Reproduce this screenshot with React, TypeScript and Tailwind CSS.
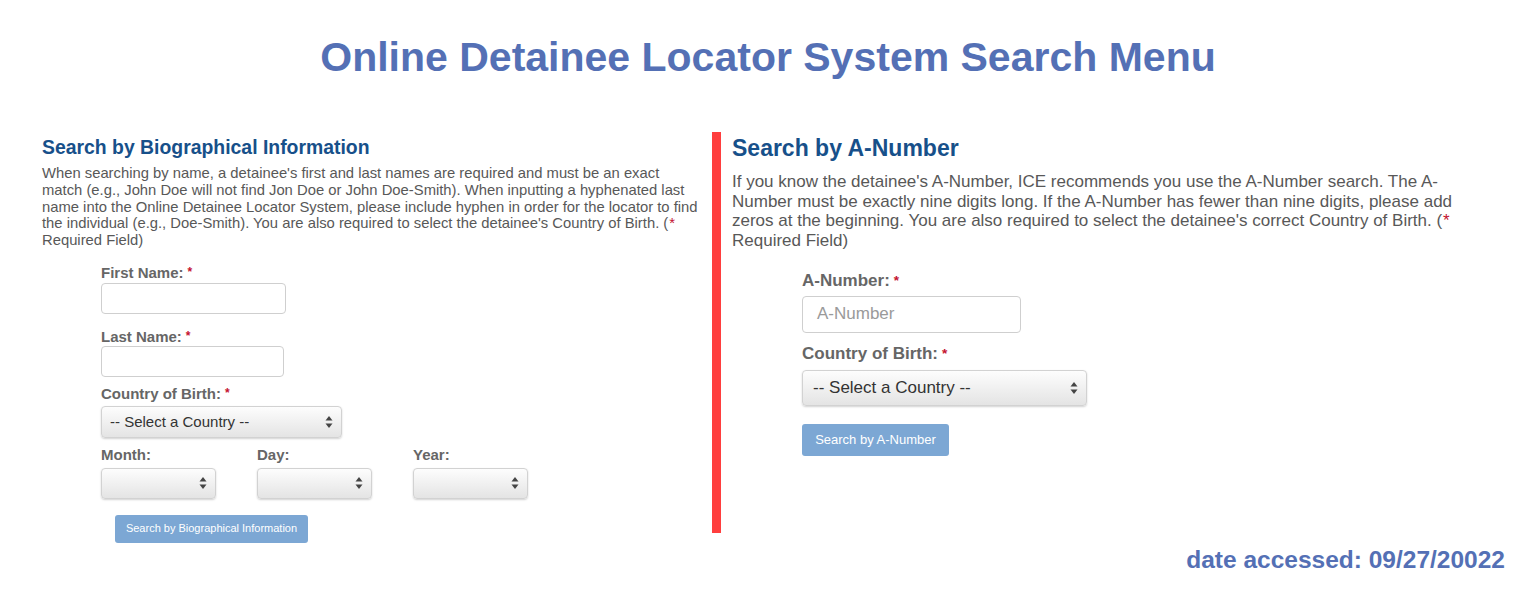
import React from 'react';

const Arrows = () => (
  <svg className="pointer-events-none absolute right-[9px] top-1/2 -translate-y-1/2" width="8" height="14" viewBox="0 0 8 14">
    <path d="M4 1 L7.5 5.5 L0.5 5.5 Z" fill="#444" />
    <path d="M4 13 L7.5 8.5 L0.5 8.5 Z" fill="#444" />
  </svg>
);

function Select({ className, text, textClass }: { className: string; text?: string; textClass?: string }) {
  return (
    <div className={`relative ${className}`}>
      <div
        className={`flex h-full w-full items-center rounded-[4px] border border-[#d2d2d2] bg-gradient-to-b from-[#fdfdfd] to-[#e4e4e4] shadow-[0_1px_2px_rgba(0,0,0,0.18)] ${textClass ?? ''}`}
      >
        {text}
      </div>
      <Arrows />
    </div>
  );
}

const Req = () => <span className="ml-[4px] text-[0.8em] align-top text-[#c4122f]">*</span>;

export default function App() {
  return (
    <div className="h-[597px] w-full overflow-hidden bg-white font-['Liberation_Sans',Arial,sans-serif]">
      <div className="h-[132px] pt-[33px] text-center">
        <h1 className="text-[41px] font-bold leading-[48px] text-[#5470b5]">
          Online Detainee Locator System Search Menu
        </h1>
      </div>

      <div className="flex h-[401px] items-start">
        {/* left: biographical search */}
        <div className="w-[670px] shrink-0 pl-[42px]">
          <h2 className="mt-[4px] text-[19.4px] font-bold leading-[22px] text-[#17508a]">
            Search by Biographical Information
          </h2>
          <p className="mt-[7px] w-[659px] text-[14.8px] leading-[16.8px] text-[#585858]">
            When searching by name, a detainee's first and last names are required and must be an exact match (e.g., John
            Doe will not find Jon Doe or John Doe-Smith). When inputting a hyphenated last name into the Online Detainee
            Locator System, please include hyphen in order for the locator to find the individual (e.g., Doe-Smith). You
            are also required to select the detainee's Country of Birth. (<span className="ml-[1px] text-[#c4122f]">*</span>{' '}
            Required Field)
          </p>

          <div className="mt-[15px] pl-[59px] text-[15px] font-bold leading-[17px] text-[#666]">
            <div className="mb-[2px]">
              First Name:
              <Req />
            </div>
            <div className="h-[31px] w-[185px] rounded-[4px] border border-[#cfcfcf] bg-white" />

            <div className="mb-[1px] mt-[14px]">
              Last Name:
              <Req />
            </div>
            <div className="h-[31px] w-[183px] rounded-[4px] border border-[#cfcfcf] bg-white" />

            <div className="mb-[4px] mt-[8px]">
              Country of Birth:
              <Req />
            </div>
            <Select
              className="h-[32px] w-[241px]"
              text="-- Select a Country --"
              textClass="pl-[8px] text-[15px] font-normal text-[#333]"
            />

            <div className="mt-[8px] flex gap-[41px]">
              {['Month:', 'Day:', 'Year:'].map((l) => (
                <div key={l} className="w-[115px]">
                  <div className="mb-[5px]">{l}</div>
                  <Select className="h-[31px] w-[115px]" />
                </div>
              ))}
            </div>

            <button className="ml-[14px] mt-[16px] h-[28px] w-[193px] rounded-[3px] bg-[#7ca7d4] text-[11px] font-normal text-white">
              Search by Biographical Information
            </button>
          </div>
        </div>

        {/* divider */}
        <div className="ml-[42px] h-[401px] w-[9px] shrink-0 bg-[#ff3e3e]" />

        {/* right: A-number search */}
        <div className="pl-[11px]">
          <h2 className="mt-[3px] text-[23px] font-bold leading-[26px] text-[#17508a]">Search by A-Number</h2>
          <p className="mt-[11px] w-[755px] text-[17px] leading-[19.7px] text-[#585858]">
            If you know the detainee's A-Number, ICE recommends you use the A-Number search. The A-Number must be
            exactly nine digits long. If the A-Number has fewer than nine digits, please add zeros at the beginning. You
            are also required to select the detainee's correct Country of Birth. (
            <span className="ml-[1px] text-[#c4122f]">*</span> Required Field)
          </p>

          <div className="mt-[20px] pl-[70px] text-[17px] font-bold leading-[20px] text-[#666]">
            <div className="mb-[5px]">
              A-Number:
              <Req />
            </div>
            <div className="flex h-[37px] w-[219px] items-center rounded-[4px] border border-[#cfcfcf] bg-white pl-[14px] text-[17px] font-normal text-[#9a9a9a]">
              A-Number
            </div>

            <div className="mb-[6px] mt-[11px]">
              Country of Birth:
              <Req />
            </div>
            <Select
              className="h-[36px] w-[285px]"
              text="-- Select a Country --"
              textClass="pl-[10px] text-[17px] font-normal text-[#333]"
            />

            <button className="mt-[18px] h-[32px] w-[147px] rounded-[3px] bg-[#7ca7d4] text-[13px] font-normal text-white">
              Search by A-Number
            </button>
          </div>
        </div>
      </div>

      <div className="mt-[13px] pr-[31px] text-right text-[24.5px] font-bold leading-[28px] text-[#5470b5]">
        date accessed: 09/27/20022
      </div>
    </div>
  );
}
